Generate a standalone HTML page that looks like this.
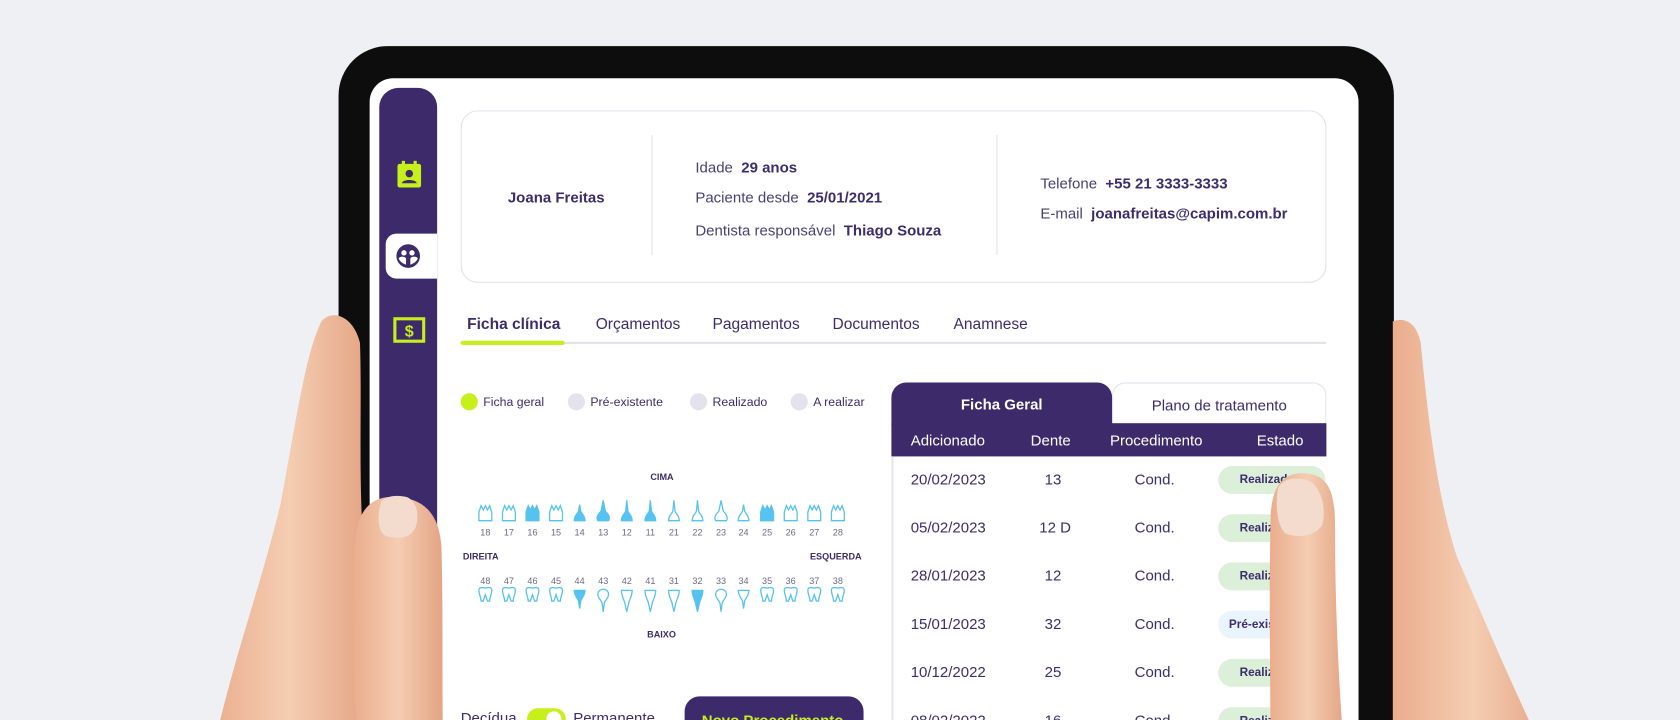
<!DOCTYPE html>
<html style="width:1680px;height:720px;overflow:hidden"><head><meta charset="utf-8"><style>
*{margin:0;padding:0;box-sizing:border-box}
body{width:1680px;height:720px;overflow:hidden;background:#eef0f3;font-family:"Liberation Sans",sans-serif;position:relative;color:#3b2d6b}
#clip{position:absolute;left:0;top:0;width:1680px;height:720px;overflow:hidden}
#w{position:absolute;left:0;top:0;width:1568px;height:672px;overflow:hidden;transform:scale(1.0714);transform-origin:0 0}
.abs{position:absolute}
.bezel{left:316px;top:43px;width:985px;height:720px;background:#0d0d0d;border-radius:46px}
.screen{left:345px;top:73px;width:923px;height:680px;background:#fff;border-radius:22px;overflow:hidden}
.side{left:9px;top:9px;width:54px;height:700px;background:#3d2a6b;border-radius:18px 18px 0 0}
.card{left:85px;top:30px;width:808px;height:161px;border:1.5px solid #e2e2ea;border-radius:16px}
.t{position:absolute;white-space:nowrap;font-size:14px;color:#4a3f75}
b{color:#3b2d6b}
.tab{position:absolute;top:222px;font-size:14.5px;color:#3b2d6b}
.dot{display:inline-block;width:16px;height:16px;border-radius:50%;background:#e4e2ec;vertical-align:-4px;margin-right:5px}
.lg{position:absolute;top:294px;font-size:11.5px;color:#3b2d6b}
.lbl{position:absolute;font-size:8.5px;font-weight:bold;color:#3b2d6b}
.row{position:absolute;left:487px;width:420px;font-size:14px;color:#3b2d6b}
.row span{position:absolute}
.pill{position:absolute;left:305px;top:-4px;width:100px;height:26px;border-radius:13px;background:#dcefd8;font-size:11px;font-weight:bold;padding:7px 0 0 20px;color:#3b2d6b}
</style></head><body><div id="clip"><div id="w">
<div class="abs bezel"></div>
<div class="abs screen">
 <div class="abs side">
  <svg class="abs" style="left:16px;top:68px" width="24" height="26" viewBox="0 0 24 26"><rect x="1" y="3" width="22" height="22" rx="2" fill="#c6ef1b"/><rect x="5" y="0" width="3" height="6" fill="#c6ef1b"/><rect x="16" y="0" width="3" height="6" fill="#c6ef1b"/><circle cx="12" cy="12" r="3.5" fill="#3d2a6b"/><path d="M5 21c1-4 13-4 14 0z" fill="#3d2a6b"/></svg>
  <div class="abs" style="left:6px;top:136px;width:48px;height:42px;background:#fff;border-radius:10px 0 0 10px"></div>
  <svg class="abs" style="left:15px;top:145px" width="24" height="24" viewBox="0 0 24 24"><circle cx="12" cy="12" r="11" fill="#3d2a6b"/><circle cx="8" cy="9" r="2.5" fill="#fff"/><circle cx="15.5" cy="9" r="2.5" fill="#fff"/><path d="M3 14c2-2 5-2 7 0v6c-3-1-6-3-7-6zM21 14c-2-2-5-2-7 0v6c3-1 6-3 7-6z" fill="#fff"/></svg>
  <svg class="abs" style="left:13px;top:214px" width="30" height="24" viewBox="0 0 30 24"><rect x="1.5" y="1.5" width="27" height="21" fill="none" stroke="#c6ef1b" stroke-width="3"/><text x="15" y="18" text-anchor="middle" font-family="Liberation Sans" font-weight="bold" font-size="15" fill="#c6ef1b">$</text></svg>
 </div>
 <div class="abs card">
  <div class="t" style="left:43px;top:72px;font-weight:bold;color:#3b2d6b">Joana Freitas</div>
  <div class="abs" style="left:177px;top:22px;width:1px;height:112px;background:#e2e2ea"></div>
  <div class="t" style="left:218px;top:44px">Idade&nbsp; <b>29 anos</b></div>
  <div class="t" style="left:218px;top:72px">Paciente desde&nbsp; <b>25/01/2021</b></div>
  <div class="t" style="left:218px;top:103px">Dentista responsável&nbsp; <b>Thiago Souza</b></div>
  <div class="abs" style="left:499px;top:22px;width:1px;height:112px;background:#e2e2ea"></div>
  <div class="t" style="left:540px;top:59px">Telefone&nbsp; <b>+55 21 3333-3333</b></div>
  <div class="t" style="left:540px;top:87px">E-mail&nbsp; <b>joanafreitas@capim.com.br</b></div>
 </div>
 <div class="tab" style="left:91px;font-weight:bold">Ficha clínica</div>
 <div class="tab" style="left:211px">Orçamentos</div>
 <div class="tab" style="left:320px">Pagamentos</div>
 <div class="tab" style="left:432px">Documentos</div>
 <div class="tab" style="left:545px">Anamnese</div>
 <div class="abs" style="left:85px;top:246px;width:808px;height:1.5px;background:#e2e2ea"></div>
 <div class="abs" style="left:85px;top:245px;width:97px;height:4px;background:#c6ef1b;border-radius:2px"></div>
 <div class="lg" style="left:85px"><span class="dot" style="background:#c6ef1b"></span>Ficha geral</div>
 <div class="lg" style="left:185px"><span class="dot"></span>Pré-existente</div>
 <div class="lg" style="left:299px"><span class="dot"></span>Realizado</div>
 <div class="lg" style="left:393px"><span class="dot"></span>A realizar</div>
 <div class="lbl" style="left:262px;top:367px">CIMA</div>
 <div class="lbl" style="left:87px;top:441px">DIREITA</div>
 <div class="lbl" style="left:411px;top:441px">ESQUERDA</div>
 <div class="lbl" style="left:259px;top:514px">BAIXO</div>
 <svg class="abs" style="left:0;top:0" width="923" height="600" viewBox="0 0 923 600">
  <g font-family="Liberation Sans" font-size="8.5" fill="#6e6a86" text-anchor="middle">
   <text x="108" y="427">18</text><text x="130" y="427">17</text><text x="152" y="427">16</text><text x="174" y="427">15</text><text x="196" y="427">14</text><text x="218" y="427">13</text><text x="240" y="427">12</text><text x="262" y="427">11</text><text x="284" y="427">21</text><text x="306" y="427">22</text><text x="328" y="427">23</text><text x="349" y="427">24</text><text x="371" y="427">25</text><text x="393" y="427">26</text><text x="415" y="427">27</text><text x="437" y="427">28</text>
   <text x="108" y="472">48</text><text x="130" y="472">47</text><text x="152" y="472">46</text><text x="174" y="472">45</text><text x="196" y="472">44</text><text x="218" y="472">43</text><text x="240" y="472">42</text><text x="262" y="472">41</text><text x="284" y="472">31</text><text x="306" y="472">32</text><text x="328" y="472">33</text><text x="349" y="472">34</text><text x="371" y="472">35</text><text x="393" y="472">36</text><text x="415" y="472">37</text><text x="437" y="472">38</text>
  </g>
  <g stroke="#55c2f0" stroke-width="1.2">
   <path fill="none" d="M102 413 l0-8 2-6 2 4 2-4 2 4 2-4 2 6 0 8z"/>
   <path fill="none" d="M124 413 l0-8 2-6 2 4 2-4 2 4 2-4 2 6 0 8z"/>
   <path fill="#55c2f0" d="M146 413 l0-8 2-6 2 4 2-4 2 4 2-4 2 6 0 8z"/>
   <path fill="none" d="M168 413 l0-8 2-6 2 4 2-4 2 4 2-4 2 6 0 8z"/>
   <path fill="#55c2f0" d="M191 413 c0-5 3-6 4-9 l1-6 1 6 c1 3 4 4 4 9z"/>
   <path fill="#55c2f0" d="M213 413 c-2-3 0-6 3-9 l2-10 2 10 c3 3 5 6 3 9z"/>
   <path fill="#55c2f0" d="M235 413 c0-5 3-6 4-9 l1-10 1 10 c1 3 4 4 4 9z"/>
   <path fill="#55c2f0" d="M257 413 c0-5 3-6 4-9 l1-10 1 10 c1 3 4 4 4 9z"/>
   <path fill="none" d="M279 413 c0-5 3-6 4-9 l1-10 1 10 c1 3 4 4 4 9z"/>
   <path fill="none" d="M301 413 c0-5 3-6 4-9 l1-10 1 10 c1 3 4 4 4 9z"/>
   <path fill="none" d="M323 413 c-2-3 0-6 3-9 l2-10 2 10 c3 3 5 6 3 9z"/>
   <path fill="none" d="M344 413 c0-5 3-6 4-9 l1-6 1 6 c1 3 4 4 4 9z"/>
   <path fill="#55c2f0" d="M365 413 l0-8 2-6 2 4 2-4 2 4 2-4 2 6 0 8z"/>
   <path fill="none" d="M387 413 l0-8 2-6 2 4 2-4 2 4 2-4 2 6 0 8z"/>
   <path fill="none" d="M409 413 l0-8 2-6 2 4 2-4 2 4 2-4 2 6 0 8z"/>
   <path fill="none" d="M431 413 l0-8 2-6 2 4 2-4 2 4 2-4 2 6 0 8z"/>
   <path fill="none" d="M102 478 c0-3 3-3 6-2 3-1 6-1 6 2 0 4-2 6-2 10 h-2 l-2-6-2 6h-2c0-4-2-6-2-10z"/>
   <path fill="none" d="M124 478 c0-3 3-3 6-2 3-1 6-1 6 2 0 4-2 6-2 10 h-2 l-2-6-2 6h-2c0-4-2-6-2-10z"/>
   <path fill="none" d="M146 478 c0-3 3-3 6-2 3-1 6-1 6 2 0 4-2 6-2 10 h-2 l-2-6-2 6h-2c0-4-2-6-2-10z"/>
   <path fill="none" d="M168 478 c0-3 3-3 6-2 3-1 6-1 6 2 0 4-2 6-2 10 h-2 l-2-6-2 6h-2c0-4-2-6-2-10z"/>
   <path fill="#55c2f0" d="M191 478 h10 c0 5-3 7-4 10 l-1 7-1-7 c-1-3-4-5-4-10z"/>
   <path fill="none" d="M213 482 c0-4 3-5 5-5 2 0 5 1 5 5 0 3-3 5-4 8 l-1 8-1-8 c-1-3-4-5-4-8z"/>
   <path fill="none" d="M235 478 h10 c0 5-2 8-3 11 l-2 9-2-9 c-1-3-3-6-3-11z"/>
   <path fill="none" d="M257 478 h10 c0 5-2 8-3 11 l-2 9-2-9 c-1-3-3-6-3-11z"/>
   <path fill="none" d="M279 478 h10 c0 5-2 8-3 11 l-2 9-2-9 c-1-3-3-6-3-11z"/>
   <path fill="#55c2f0" d="M301 478 h10 c0 5-2 8-3 11 l-2 9-2-9 c-1-3-3-6-3-11z"/>
   <path fill="none" d="M323 482 c0-4 3-5 5-5 2 0 5 1 5 5 0 3-3 5-4 8 l-1 8-1-8 c-1-3-4-5-4-8z"/>
   <path fill="none" d="M344 478 h10 c0 5-3 7-4 10 l-1 7-1-7 c-1-3-4-5-4-10z"/>
   <path fill="none" d="M365 478 c0-3 3-3 6-2 3-1 6-1 6 2 0 4-2 6-2 10 h-2 l-2-6-2 6h-2c0-4-2-6-2-10z"/>
   <path fill="none" d="M387 478 c0-3 3-3 6-2 3-1 6-1 6 2 0 4-2 6-2 10 h-2 l-2-6-2 6h-2c0-4-2-6-2-10z"/>
   <path fill="none" d="M409 478 c0-3 3-3 6-2 3-1 6-1 6 2 0 4-2 6-2 10 h-2 l-2-6-2 6h-2c0-4-2-6-2-10z"/>
   <path fill="none" d="M431 478 c0-3 3-3 6-2 3-1 6-1 6 2 0 4-2 6-2 10 h-2 l-2-6-2 6h-2c0-4-2-6-2-10z"/>
  </g>
 </svg>
 <div class="abs" style="left:85px;top:589px;font-size:14px;color:#3b2d6b">Decídua</div>
 <div class="abs" style="left:147px;top:588px;width:36px;height:20px;border-radius:10px;background:#c6ef1b"></div>
 <div class="abs" style="left:165px;top:591px;width:14px;height:14px;border-radius:7px;background:#fff"></div>
 <div class="abs" style="left:190px;top:589px;font-size:14px;color:#3b2d6b">Permanente</div>
 <div class="abs" style="left:294px;top:577px;width:167px;height:50px;border-radius:14px;background:#3d2a6b;color:#c6ef1b;font-weight:bold;font-size:14px;padding:14px 0 0 16px">Novo Procedimento</div>
 <div class="abs" style="left:487px;top:284px;width:206px;height:40px;background:#3d2a6b;border-radius:14px 14px 0 0;color:#fff;font-weight:bold;font-size:14px;text-align:center;padding-top:12px">Ficha Geral</div>
 <div class="abs" style="left:693px;top:284px;width:200px;height:40px;border:1.5px solid #e2e2ea;border-bottom:none;border-radius:12px 12px 0 0;font-size:14px;text-align:center;padding-top:12px;color:#3b2d6b">Plano de tratamento</div>
 <div class="abs" style="left:487px;top:322px;width:406px;height:31px;background:#3d2a6b;color:#fff;font-size:14px">
  <span class="abs" style="left:18px;top:8px">Adicionado</span><span class="abs" style="left:130px;top:8px">Dente</span><span class="abs" style="left:204px;top:8px">Procedimento</span><span class="abs" style="left:341px;top:8px">Estado</span></div>
 <div class="abs" style="left:487px;top:353px;width:1.5px;height:330px;background:#e6e6ee"></div>
 <div class="row" style="top:366px"><span style="left:18px">20/02/2023</span><span style="left:143px">13</span><span style="left:227px">Cond.</span><div class="pill">Realizado</div></div>
 <div class="row" style="top:411px"><span style="left:18px">05/02/2023</span><span style="left:138px">12 D</span><span style="left:227px">Cond.</span><div class="pill">Realizado</div></div>
 <div class="row" style="top:456px"><span style="left:18px">28/01/2023</span><span style="left:143px">12</span><span style="left:227px">Cond.</span><div class="pill">Realizado</div></div>
 <div class="row" style="top:501px"><span style="left:18px">15/01/2023</span><span style="left:143px">32</span><span style="left:227px">Cond.</span><div class="pill" style="background:#eaf4fc;padding-left:10px">Pré-existente</div></div>
 <div class="row" style="top:546px"><span style="left:18px">10/12/2022</span><span style="left:143px">25</span><span style="left:227px">Cond.</span><div class="pill">Realizado</div></div>
 <div class="row" style="top:591px"><span style="left:18px">08/02/2022</span><span style="left:143px">16</span><span style="left:227px">Cond.</span><div class="pill">Realizado</div></div>
</div>
<svg class="abs" style="left:0;top:0" width="1568" height="672" viewBox="0 0 1568 672">
 <defs><linearGradient id="sk" x1="0" x2="1"><stop offset="0" stop-color="#e9ad8c"/><stop offset="0.5" stop-color="#f5cdb2"/><stop offset="1" stop-color="#e3a383"/></linearGradient></defs>
 <path d="M195 720 C215 620 240 560 262 470 C275 400 285 330 300 300 C310 288 330 295 336 320 C338 380 334 450 340 520 L345 720Z" fill="url(#sk)"/>
 <path d="M335 720 C330 640 326 560 332 500 C336 470 352 462 372 464 C396 466 410 480 412 510 C414 580 412 650 414 720Z" fill="url(#sk)"/>
 <path d="M356 468 C352 480 352 496 360 500 C372 504 384 502 388 492 C392 478 388 468 380 464 C372 462 362 462 356 468Z" fill="#f3dccd"/>
 <path d="M1186 720 C1186 640 1184 560 1186 480 C1188 450 1200 440 1220 442 C1240 444 1246 460 1246 490 C1246 570 1250 650 1256 720Z" fill="url(#sk)"/>
 <path d="M1193 455 C1190 470 1192 492 1200 498 C1212 503 1228 500 1234 490 C1238 476 1234 458 1224 450 C1212 444 1198 446 1193 455Z" fill="#f3dccd"/>
 <path d="M1300 300 C1310 296 1322 300 1326 320 C1332 380 1340 460 1360 520 C1390 590 1420 660 1450 720 L1300 720Z" fill="url(#sk)"/>
</svg>
</div></div></body></html>
